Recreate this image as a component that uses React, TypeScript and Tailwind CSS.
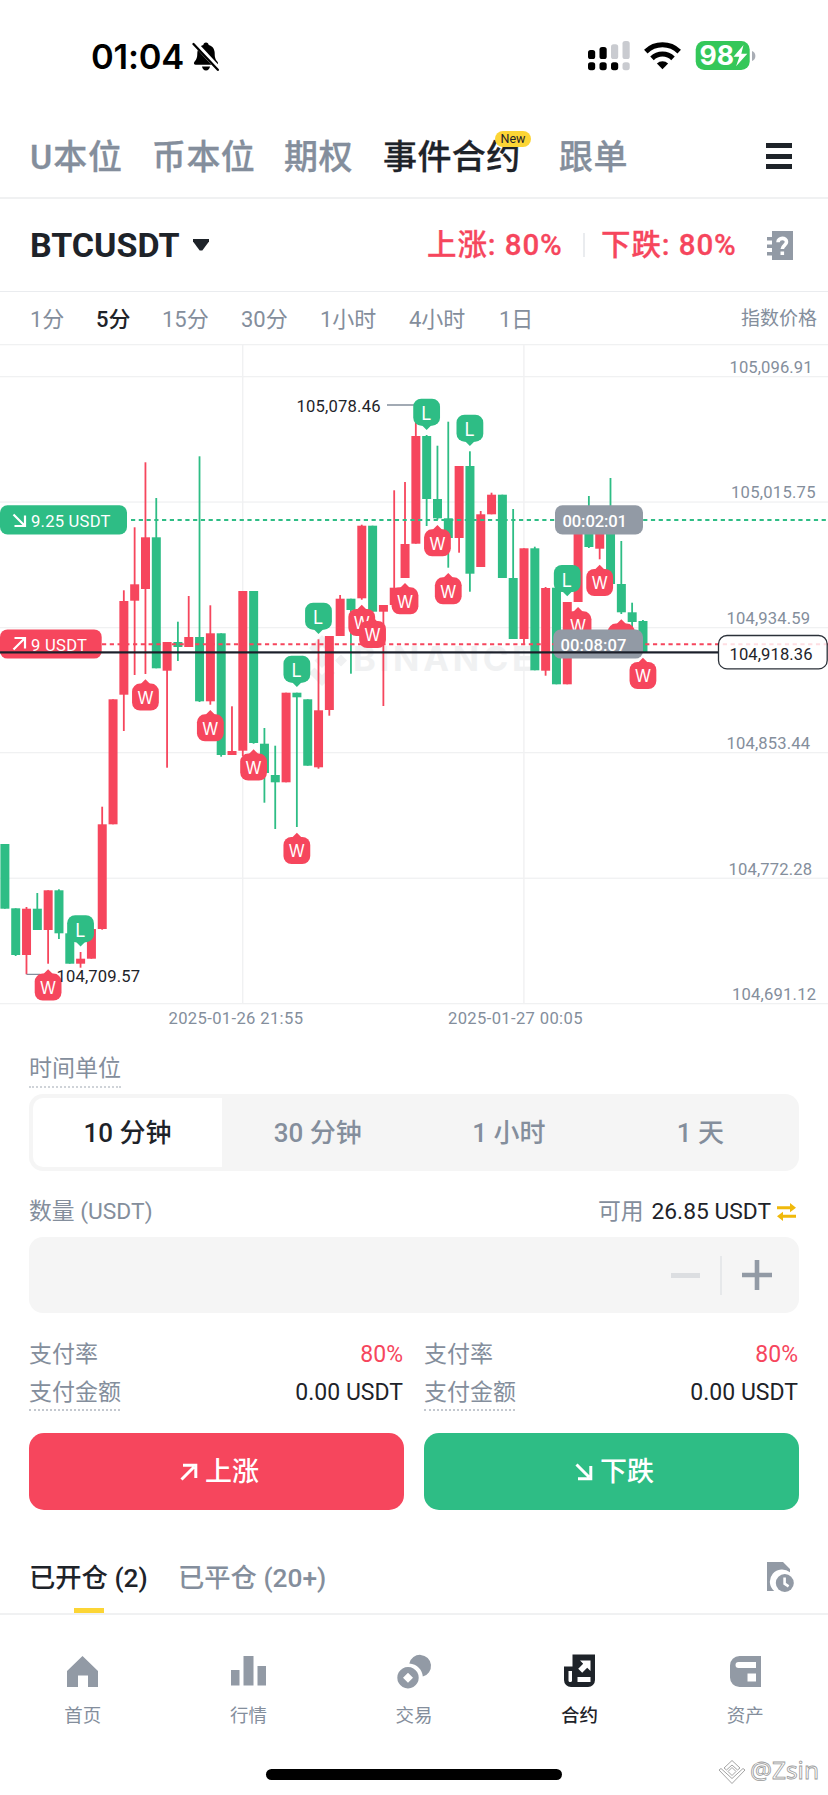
import React from "react";

const RED = "#f6465d";
const GREEN = "#2ebd85";
const INK = "#1e2329";
const GREY = "#848e9c";
const FONT = 'Roboto, "Noto Sans CJK SC", sans-serif';

const STEP = 10.815;
const cx = (i: number) => 4.85 + i * STEP;

// [direction, body top, body bottom, wick top, wick bottom]
type Candle = [0 | 1, number, number, number, number];

const candles: Candle[] = [
  [1, 844, 908.7, 844, 908.7],
  [1, 908.3, 955, 908.3, 956],
  [0, 908.7, 955, 907, 974.3],
  [1, 908.7, 930, 893, 930],
  [0, 890.3, 930, 890.3, 963.7],
  [1, 890.3, 933.3, 889.3, 939],
  [1, 933.3, 963.7, 933.3, 963.7],
  [0, 958.7, 963.7, 952, 967.7],
  [0, 929, 958.7, 929, 958.7],
  [0, 824.3, 929, 806.7, 929.7],
  [0, 699.3, 824.3, 699.3, 824.3],
  [0, 601, 694.7, 590.3, 731],
  [0, 584.3, 600.7, 527.3, 675],
  [0, 537.3, 589, 462.3, 674],
  [1, 537.3, 668.3, 498, 668.3],
  [0, 642, 670.7, 642, 767.7],
  [1, 642, 647, 621.7, 661],
  [0, 637, 647, 596, 647],
  [1, 637, 701.3, 456.3, 702],
  [0, 633.3, 701.3, 605.3, 704.7],
  [1, 633.3, 755, 633.3, 756.7],
  [0, 751, 755, 706.3, 755],
  [0, 591, 750.7, 591, 756],
  [1, 591, 743, 591, 743.7],
  [1, 743.7, 773, 728, 802.7],
  [1, 775, 782.3, 745.7, 829],
  [0, 692.7, 782.3, 692.7, 782.3],
  [1, 692.7, 697.3, 692.7, 827],
  [1, 699.3, 765.7, 699.3, 765.7],
  [0, 710.3, 767.3, 639.3, 768.7],
  [0, 636, 710, 636, 715.7],
  [0, 598.7, 636, 595, 636],
  [1, 598.7, 610, 598.7, 673.7],
  [0, 525.7, 598.3, 524.7, 599.7],
  [1, 525.7, 611.7, 525.7, 611.7],
  [0, 605, 611.7, 605, 706],
  [0, 587.7, 605, 490.3, 605],
  [0, 544, 578, 482, 578],
  [0, 436, 543.7, 420, 543.7],
  [1, 436, 499, 435, 526],
  [1, 499, 518.3, 445.7, 519.7],
  [1, 518.3, 538, 421.7, 567.7],
  [0, 466, 538, 466, 552.7],
  [1, 466, 573.7, 451.3, 591.7],
  [0, 514.3, 567, 511, 567],
  [0, 494.7, 514.3, 492.7, 514.3],
  [1, 494.7, 578, 494.7, 578],
  [1, 578, 639, 509, 639],
  [0, 548.3, 639, 548.3, 644],
  [1, 548.3, 670.3, 546.7, 670.3],
  [0, 588, 670.7, 587, 675.7],
  [1, 587.7, 684.3, 587.7, 684.3],
  [0, 602, 684.3, 602, 684.3],
  [0, 520, 602, 520, 602],
  [1, 515, 547, 496, 548],
  [0, 520, 548.7, 520, 559.3],
  [1, 520, 584, 478, 584],
  [1, 584, 612.3, 541, 614],
  [1, 612.3, 622, 602.7, 628],
  [1, 621, 652.3, 620, 652.3],
];

// [candle index, y of the pointer tip]
const wins: [number, number][] = [
  [4, 969.3], [13, 679.3], [19, 710], [23, 749.3], [27, 832.7], [33, 604.7], [34, 616.7],
  [37, 583], [40, 525], [41, 573], [55, 564.7], [53, 607], [57, 619.3], [59, 657.7],
];
const losses: [number, number][] = [[7, 946.5], [27, 687], [29, 634], [39, 430], [43, 446], [52, 596.3]];

function Win({ i, y }: { i: number; y: number }) {
  const x = cx(i);
  return (
    <g>
      <path d={`M${x - 5} ${y + 5}L${x} ${y}L${x + 5} ${y + 5}Z`} fill={RED} />
      <rect x={x - 13.4} y={y + 4.3} width="26.8" height="27" rx="8" fill={RED} />
      <text x={x} y={y + 24.6} fontSize="17.5" fontFamily="Inter" textAnchor="middle" textLength="16" lengthAdjust="spacingAndGlyphs" fill="#fff">W</text>
    </g>
  );
}

function Loss({ i, y }: { i: number; y: number }) {
  const x = cx(i);
  return (
    <g>
      <path d={`M${x - 5} ${y - 5}L${x} ${y}L${x + 5} ${y - 5}Z`} fill={GREEN} />
      <rect x={x - 13.4} y={y - 31.3} width="26.8" height="27" rx="8" fill={GREEN} />
      <text x={x - 5.4} y={y - 9.6} fontSize="18" fontFamily="Inter" fill="#fff">L</text>
    </g>
  );
}

function Num({ x, y, w, fill = GREY, weight = 400, children }: { x: number; y: number; w: number; fill?: string; weight?: number; children: string }) {
  return (
    <text x={x} y={y} fontSize="16.6" fontFamily={FONT} fontWeight={weight} textLength={w} fill={fill}>
      {children}
    </text>
  );
}

function Chart() {
  return (
    <svg className="block shrink-0" width="828" height="696" viewBox="0 344 828 696">
      <g fill="#f0f1f2">
        {[344, 376, 501.4, 627, 752, 877.6, 1003].map((y) => <rect key={y} x="0" y={y} width="828" height="1.3" />)}
        <rect x="242" y="344" width="1.4" height="660" />
        <rect x="523.2" y="344" width="1.4" height="660" />
      </g>
      <g fill="#f0f1f2">
        <path d="M322 635l13 13-5.5 5.5-7.5-7.5-7.5 7.5-5.5-5.5zM322 686l13-13-5.5-5.5-7.5 7.5-7.5-7.5-5.5 5.5zM303 654.500l6 6-6 6-6-6zM341 654.500l6 6-6 6-6-6zM322 653l7.5 7.5-7.5 7.5-7.5-7.5z" />
        <text x="353" y="671" fontSize="34.500" fontFamily="Inter" fontWeight="700" textLength="180" lengthAdjust="spacing">BINANCE</text>
      </g>
      {candles.map(([up, t, b, wt, wb], i) => (
        <g key={i} fill={up ? GREEN : RED}>
          <rect x={cx(i) - 0.9} y={wt} width="1.8" height={wb - wt} />
          <rect x={cx(i) - 4.45} y={t} width="9" height={b - t} />
        </g>
      ))}
      <path d="M387 405H416M26.500 974.300H40" stroke="#848e9c" strokeWidth="1.3" />
      <path d="M131 520H828" stroke={GREEN} strokeWidth="2" strokeDasharray="4.200 3.560" />
      <path d="M102 644.200H828" stroke={RED} strokeWidth="2" strokeDasharray="4.200 3.560" />
      {wins.map(([i, y]) => <Win key={i} i={i} y={y} />)}
      {losses.map(([i, y]) => <Loss key={i} i={i} y={y} />)}
      <Num x={296.5} y={411.7} w={84} fill={INK}>105,078.46</Num>
      <Num x={56.5} y={981.7} w={83.5} fill={INK}>104,709.57</Num>

      <rect x="555" y="505.300" width="88" height="29.200" rx="7.500" fill="#929aa5" />
      <Num x={562.5} y={526.5} w={64.5} fill="#fff" weight={500}>00:02:01</Num>
      <rect x="553.300" y="629.600" width="89.700" height="29" rx="7.500" fill="#929aa5" />
      <Num x={560.5} y={651} w={66} fill="#fff" weight={500}>00:08:07</Num>
      <rect x="0" y="505.300" width="127" height="29.200" rx="7.500" fill={GREEN} />
      <path d="M13.500 514.500L24 525M25 515.500V526H14.500" fill="none" stroke="#fff" strokeWidth="2.200" />
      <Num x={31} y={526.5} w={79.5} fill="#fff">9.25 USDT</Num>
      <rect x="0" y="629.400" width="101.700" height="29.200" rx="7.500" fill={RED} />
      <path d="M13.500 649.500L24 639M14.500 638H25V648.500" fill="none" stroke="#fff" strokeWidth="2.200" />
      <Num x={31} y={651} w={56} fill="#fff">9 USDT</Num>

      <rect x="0" y="651.300" width="719" height="2.200" fill="#1b1f2a" />
      <rect x="718.500" y="635.500" width="108.700" height="33.400" rx="8.500" fill="#fff" fillOpacity=".82" stroke="#2b3139" strokeWidth="1.300" />
      <Num x={729.5} y={659.7} w={83} fill={INK}>104,918.36</Num>

      <Num x={729.5} y={373} w={83}>105,096.91</Num>
      <Num x={731} y={498.3} w={84.5}>105,015.75</Num>
      <Num x={726.5} y={623.5} w={83.5}>104,934.59</Num>
      <Num x={726.5} y={749} w={83.5}>104,853.44</Num>
      <Num x={728.5} y={875} w={83.5}>104,772.28</Num>
      <Num x={732} y={1000} w={84}>104,691.12</Num>
      <Num x={168.5} y={1024} w={134.5}>2025-01-26 21:55</Num>
      <Num x={448} y={1024} w={134.5}>2025-01-27 00:05</Num>
    </svg>
  );
}

function StatusBar() {
  return (
    <div className="flex h-[118px] shrink-0 items-start pt-[41px]">
      <span className="ml-[91px] mt-[-1px] w-[101px] font-[Inter] text-[34.5px] leading-[34px] font-semibold tracking-[-0.2px] text-black">01:04</span>
      <svg width="28" height="31" viewBox="0 0 28 31">
        <path d="M14 1.500c1.600 0 2.500 1 2.700 2.400 4 1 6 4.400 6 8.600 0 5 1.300 6.500 2.700 8.200 1.200 1.500.6 3-1 3H3.700c-1.700 0-2.400-1.500-1.200-3 1.400-1.700 2.800-3.200 2.800-8.200 0-4.200 2-7.600 6-8.600.2-1.400 1.100-2.400 2.700-2.400zM10 25.500h8c-.3 2.300-1.800 4-4 4s-3.700-1.700-4-4z" fill="#000" />
        <path d="M2.200 1.500L27 28.200" stroke="#fff" strokeWidth="5" />
        <path d="M1.500 3L25.800 28.800" stroke="#000" strokeWidth="2.300" strokeLinecap="round" />
      </svg>
      <svg className="ml-[368px]" width="168" height="30" viewBox="588 41 168 30">
        <g fill="#000">
          <rect x="588" y="50" width="7.200" height="9" rx="2.600" />
          <rect x="599.500" y="47" width="7.200" height="12" rx="2.600" />
          <rect x="588" y="62.200" width="7.200" height="8" rx="2.600" />
          <rect x="599.500" y="62.200" width="7.200" height="8" rx="2.600" />
          <rect x="611" y="62.200" width="7.200" height="8" rx="2.600" />
        </g>
        <g fill="#c9cbd0">
          <rect x="611" y="44.200" width="7.200" height="14.800" rx="2.600" />
          <rect x="622.500" y="41" width="7.200" height="18" rx="2.600" />
          <rect x="622.500" y="62.200" width="7.200" height="8" rx="2.600" />
        </g>
        <g fill="none" stroke="#000" strokeWidth="5">
          <path d="M645.800 51.600a24 24 0 0 1 33.400 0" />
          <path d="M652 58.400a15 15 0 0 1 21 0" />
        </g>
        <path d="M662.500 69.300l-5.600-5.700a8 8 0 0 1 11.200 0z" fill="#000" />
        <rect x="695.700" y="41" width="54" height="29" rx="8.500" fill="#34c759" />
        <path d="M752 51v10c2-.6 3.400-2.700 3.400-5s-1.400-4.400-3.400-5z" fill="#a9adb5" />
        <text x="699.500" y="65" fontFamily="Inter" fontSize="26.500" fontWeight="700" textLength="34.500" lengthAdjust="spacingAndGlyphs" fill="#fff">98</text>
        <path d="M743.500 45l-10 11.800h5.800l-3.200 9.400 11.200-12.400h-6z" fill="#fff" />
      </svg>
    </div>
  );
}

const interval = "whitespace-nowrap text-[#848e9c]";

function Header() {
  return (
    <>
      <div className="flex h-[81px] shrink-0 items-start border-b-2 border-[#f0f1f2] pl-[30px] text-[34px] leading-[40px] font-medium tracking-[0.4px] whitespace-nowrap text-[#848e9c] [-webkit-text-stroke:0.3px]">
        <div className="mt-[19px] flex">
          <div className="w-[122px] tracking-[0.9px]">U本位</div>
          <div className="w-[132px]">币本位</div>
          <div className="w-[99px]">期权</div>
          <div className="relative w-[176px] text-[#1e2329]">
            事件合约
            <span className="absolute top-[-6px] left-[112px] flex h-[16px] w-[36px] items-center justify-center rounded-full bg-[#fcd535] text-[12.5px] leading-none font-normal tracking-normal [-webkit-text-stroke:0px]">New</span>
          </div>
          <div className="w-[207px]">跟单</div>
        </div>
        <div className="mt-[25px] flex flex-col gap-[5.500px]">
          <div className="h-[5px] w-[26px] bg-[#1e2329]" />
          <div className="h-[5px] w-[26px] bg-[#1e2329]" />
          <div className="h-[5px] w-[26px] bg-[#1e2329]" />
        </div>
      </div>
      <div className="flex h-[93px] shrink-0 items-center border-b border-[#eaecef] pl-[30px] whitespace-nowrap">
        <div className="w-[163px] text-[34px] leading-none font-bold text-[#1e2329]">BTCUSDT</div>
        <svg width="16" height="12" viewBox="0 0 16 12"><path d="M0 0h16v2.500L9.300 11.500H6.700L0 2.500z" fill={INK} /></svg>
        <div className="ml-[218px] w-[156px] text-[29.500px] font-medium tracking-[0.9px] text-[#f6465d] [-webkit-text-stroke:0.3px]">上涨: 80%</div>
        <div className="h-[24px] w-[2px] bg-[#eaecef]" />
        <div className="ml-[16px] w-[166px] text-[29.500px] font-medium tracking-[0.9px] text-[#f6465d] [-webkit-text-stroke:0.3px]">下跌: 80%</div>
        <svg width="26" height="29" viewBox="0 0 26 29">
          <path d="M5 0h21v29H5v-4.500H0v-3.500h5v-4H0v-3.500h5v-4H0V6h5z" fill="#929aa5" />
          <path d="M11 11.200c0-5 8.500-5.200 8.500-.2 0 3.200-4.200 3.400-4.200 7M15.300 20.500v3.500" fill="none" stroke="#fff" strokeWidth="3.600" />
        </svg>
      </div>
      <div className="flex h-[52px] shrink-0 items-center pl-[30px] pt-[2px] text-[22px]">
        <div className={interval + " w-[66px]"}>1分</div>
        <div className="w-[66px] font-medium whitespace-nowrap text-[#1e2329]">5分</div>
        <div className={interval + " w-[79px]"}>15分</div>
        <div className={interval + " w-[79px]"}>30分</div>
        <div className={interval + " w-[89px]"}>1小时</div>
        <div className={interval + " w-[90px]"}>4小时</div>
        <div className={interval + " w-[242px]"}>1日</div>
        <div className={interval + " text-[19px]"}>指数价格</div>
      </div>
    </>
  );
}

function Payout() {
  return (
    <div className="w-[375px] text-[23px]">
      <div className="flex h-[38px] items-center justify-between pr-px">
        <span className="text-[#848e9c]">支付率</span>
        <span className="text-[#f6465d]">80%</span>
      </div>
      <div className="flex h-[38px] items-center justify-between pr-px">
        <span className="text-[#848e9c]">支付金额</span>
        <span className="text-[#1e2329]">0.00 USDT</span>
      </div>
      <div className="mt-[-3px] h-0 w-[91px] border-b-2 border-dotted border-[#c3c8cf]" />
    </div>
  );
}

function Order() {
  return (
    <div className="h-[470px] shrink-0 px-[29px] pt-[12px]">
      <div className="w-[92px] border-b-2 border-dotted border-[#cfd3d8] pb-px text-[23px] leading-[33px] whitespace-nowrap text-[#848e9c]">时间单位</div>
      <div className="mt-[6px] flex h-[77px] w-[770px] rounded-[14px] bg-[#f5f5f5] p-[4px] text-[26px] font-medium text-[#848e9c]">
        <div className="flex w-[189px] items-center justify-center rounded-l-[10px] bg-white pt-px text-[#1e2329]">10 分钟</div>
        <div className="flex flex-1 items-center justify-center pt-px pl-px">30 分钟</div>
        <div className="flex flex-1 items-center justify-center pt-px pl-[2px]">1 小时</div>
        <div className="flex flex-1 items-center justify-center pt-px pl-[2px]">1 天</div>
      </div>
      <div className="mt-[24px] flex h-[34px] items-center text-[22.800px] whitespace-nowrap text-[#848e9c]">
        <span>数量 (USDT)</span>
        <span className="mr-[8px] ml-auto">可用</span>
        <span className="text-[#1e2329]">26.85 USDT</span>
        <svg className="mr-[3px] ml-[6px]" width="19" height="18" viewBox="0 0 19 18">
          <path d="M0 3.300h13V0l6 4.700-6 4.500V6.200H0zM19 11.800H6V8.800L0 13.300l6 4.600v-3.200h13z" fill="#f0b90b" />
        </svg>
      </div>
      <div className="mt-[8px] flex h-[76px] w-[770px] items-center justify-end rounded-[14px] bg-[#f5f5f5]">
        <div className="h-[5px] w-[29px] bg-[#dcdee1]" />
        <div className="mx-[20px] h-[39px] w-[2px] bg-[#e6e8ea]" />
        <svg className="mr-[27px]" width="30" height="30" viewBox="0 0 30 30"><path d="M12.700 0h4.600v12.700H30v4.600H17.300V30h-4.600V17.300H0v-4.600h12.700z" fill="#929aa5" /></svg>
      </div>
      <div className="mt-[23px] flex justify-between">
        <Payout />
        <Payout />
      </div>
      <div className="mt-[22px] flex justify-between text-[27px] font-medium text-white">
        <button className="flex h-[77px] w-[375px] items-center justify-center gap-[7px] rounded-[15px] bg-[#f6465d] pt-px pl-[6px]">
          <svg width="18" height="18" viewBox="0 0 18 18"><path d="M1.500 16.500L14 4M3 2.200h12.800V15" fill="none" stroke="#fff" strokeWidth="3" /></svg>
          上涨
        </button>
        <button className="flex h-[77px] w-[375px] items-center justify-center gap-[7px] rounded-[15px] bg-[#2ebd85] pt-px pl-[6px]">
          <svg width="18" height="18" viewBox="0 0 18 18"><path d="M1.500 1.500L14 14M3 15.800h12.800V3" fill="none" stroke="#fff" strokeWidth="3" /></svg>
          下跌
        </button>
      </div>
    </div>
  );
}

function Positions() {
  return (
    <div className="flex h-[103px] shrink-0 items-start pl-[29px] text-[26.300px] font-medium whitespace-nowrap">
      <div className="relative flex h-[103px] w-[149px] items-center text-[#1e2329]">
        <span className="mt-[34px]">已开仓 (2)</span>
        <span className="absolute bottom-0 left-[45px] h-[5px] w-[30px] bg-[#fcd535]" />
      </div>
      <div className="flex h-[103px] items-center text-[#848e9c]"><span className="mt-[34px]">已平仓 (20+)</span></div>
      <svg className="mt-[52px] mr-[34px] ml-auto" width="27" height="31" viewBox="0 0 27 31">
        <path d="M0 0h16l7 7v3.300A11.500 11.500 0 0 0 7.200 29H0z" fill="#929aa5" />
        <circle cx="17.800" cy="21" r="9" fill="#929aa5" />
        <path d="M17.600 15.500v6.200l4 2.600" fill="none" stroke="#fff" strokeWidth="2.600" />
      </svg>
    </div>
  );
}

const navItems = [
  {
    label: "首页",
    icon: <path fillRule="evenodd" d="M16.500 1L32 16v16H22V20.500h-10V32H1V16z" />,
  },
  {
    label: "行情",
    icon: <path d="M-1 15h8.500v15.500H-1zM11.500 1h10v29.500h-10zM25.500 11H34v19.500h-8.500z" />,
  },
  {
    label: "交易",
    icon: (
      <>
        <path d="M12.300 8.400A11 11 0 1 1 25.800 21.500C25.300 14.500 20 9 12.300 8.400z" />
        <path fillRule="evenodd" d="M11 12a10.700 10.700 0 1 0 .01 0zM11 17.700l5 5-5 5-5-5z" />
      </>
    ),
  },
  {
    label: "合约",
    icon: (
      <path
        fillRule="evenodd"
        d="M9.500-.5H32V25a7 7 0 0 1-7 7H8a7 7 0 0 1-7-7V11.500h8.500zM17 5.500l3.200 3.200-5 5 4 4 5-5 3.300 3.300V5.500zM5.500 16v9.500c0 2 3.500 2 3.500 0V16zM14.500 22v5h13v-5z"
      />
    ),
  },
  {
    label: "资产",
    icon: (
      <path
        fillRule="evenodd"
        d="M10.500 1H32v31H10.500a9.500 9.500 0 0 1-9.500-9.500v-12A9.500 9.500 0 0 1 10.500 1zM9.500 7a3 3 0 0 0 0 6H27V7zM18.500 18.500v8H27v-8z"
      />
    ),
  },
];

function BottomNav() {
  return (
    <div className="flex h-[182px] shrink-0 flex-col border-t-2 border-[#f0f1f2]">
      <div className="flex pt-[40px]">
        {navItems.map(({ label, icon }) => (
          <div key={label} className={label === "合约" ? "flex flex-1 flex-col items-center text-[#1e2329]" : "flex flex-1 flex-col items-center text-[#848e9c]"}>
            <svg className="overflow-visible" width="33" height="33" viewBox="0 0 33 33" fill={label === "合约" ? INK : "#929aa5"}>{icon}</svg>
            <div className={label === "合约" ? "mt-[15px] text-[18.500px] leading-[26px] font-medium" : "mt-[15px] text-[18.500px] leading-[26px]"}>{label}</div>
          </div>
        ))}
      </div>
      <div className="relative mt-[40px] ml-[266px] h-[10.500px] w-[296px] rounded-full bg-black">
        <svg className="absolute top-[-12px] left-[452px]" width="110" height="38" viewBox="0 0 110 38" fill="none" stroke="#9a9a9a" strokeWidth="0.900">
          <path d="M6 11L14 3.500L22 11L19.500 13L14 8L8.500 13zM1 13L3 11.500L14 21.500L25 11.500L27 13L14 26.500zM14 10.500L18 14.500L14 18.500L10 14.500z" />
          <text x="32" y="22" fontSize="24" fontFamily='"Noto Sans"' fill="#fff" strokeWidth="0.800" textLength="69" lengthAdjust="spacingAndGlyphs">@Zsin</text>
        </svg>
      </div>
    </div>
  );
}

export default function App() {
  return (
    <div className='flex h-[1795px] w-[828px] flex-col overflow-hidden bg-white font-[Roboto,"Noto_Sans_CJK_SC",sans-serif]'>
      <StatusBar />
      <Header />
      <Chart />
      <Order />
      <Positions />
      <BottomNav />
    </div>
  );
}
